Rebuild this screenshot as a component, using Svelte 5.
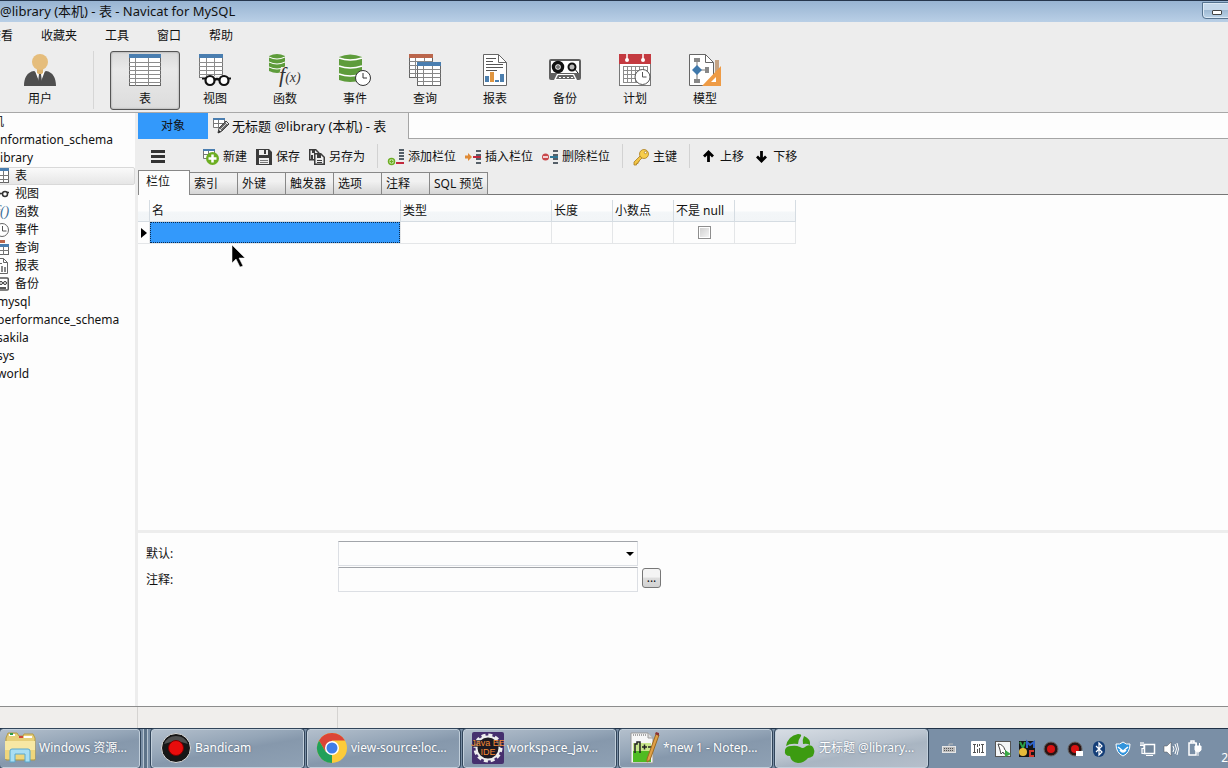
<script lang="ts">
	const menus = ['查看', '收藏夹', '工具', '窗口', '帮助'];

	const tools = [
		{ icon: 'table', label: '表' },
		{ icon: 'view', label: '视图' },
		{ icon: 'func', label: '函数' },
		{ icon: 'event', label: '事件' },
		{ icon: 'query', label: '查询' },
		{ icon: 'report', label: '报表' },
		{ icon: 'backup', label: '备份' },
		{ icon: 'plan', label: '计划' },
		{ icon: 'model', label: '模型' }
	];

	const tree = [
		{ level: 'server', label: '本机' },
		{ level: 'db', label: 'information_schema' },
		{ level: 'db', label: 'library' },
		{ level: 'obj', label: '表', icon: 's-table' },
		{ level: 'obj', label: '视图', icon: 's-view' },
		{ level: 'obj', label: '函数', icon: 's-func' },
		{ level: 'obj', label: '事件', icon: 's-event' },
		{ level: 'obj', label: '查询', icon: 's-query' },
		{ level: 'obj', label: '报表', icon: 's-report' },
		{ level: 'obj', label: '备份', icon: 's-backup' },
		{ level: 'db', label: 'mysql' },
		{ level: 'db', label: 'performance_schema' },
		{ level: 'db', label: 'sakila' },
		{ level: 'db', label: 'sys' },
		{ level: 'db', label: 'world' }
	];

	const actions = [
		[
			{ icon: 'new', label: '新建' },
			{ icon: 'save', label: '保存' },
			{ icon: 'save-as', label: '另存为' }
		],
		[
			{ icon: 'add-field', label: '添加栏位' },
			{ icon: 'insert-field', label: '插入栏位' },
			{ icon: 'delete-field', label: '删除栏位' }
		],
		[{ icon: 'key', label: '主键' }],
		[
			{ icon: 'up', label: '上移' },
			{ icon: 'down', label: '下移' }
		]
	];

	const designTabs = ['栏位', '索引', '外键', '触发器', '选项', '注释', 'SQL 预览'];

	const tasks = [
		{ icon: 'bandicam', label: 'Bandicam' },
		{ icon: 'chrome', label: 'view-source:loc...' },
		{ icon: 'eclipse', label: 'workspace_jav...' },
		{ icon: 'notepad', label: '*new 1 - Notep...' },
		{ icon: 'navicat', label: '无标题 @library...' }
	];

	const tray = ['ime', 'mysql', 'vmc', 'rec', 'rec2', 'bluetooth', 'shield', 'network', 'volume', 'power'];

	let activeTool = '表';
	let activeNode = '表';
	let activeTab = '栏位';
	let activeTask = 'navicat';
	let notNull = false;
	let comment = '';
</script>

{#snippet grid(x, y, w, h, head)}
	<rect {x} {y} width={w} height={h} fill="#fff" stroke="#666" />
	<path
		d="M{x} {y + 7}h{w}M{x} {y + 11}h{w}M{x} {y + 15}h{w}M{x} {y + 19}h{w}M{x + 6} {y + 3}v{h - 3}M{x + 15} {y + 3}v{h - 3}"
		stroke="#888"
		fill="none"
	/>
	<rect x={x - 0.5} y={y - 0.5} width={w + 1} height="4" fill={head} />
{/snippet}

{#snippet bigIcon(name)}
	<svg class="big-icon" viewBox="0 0 32 32" aria-hidden="true">
		{#if name === 'user'}
			<path d="M0 32c0-8 3-14 10-15l6 3 6-3c7 1 10 7 10 15z" fill="#4f4f4f" />
			<path d="M11 17l5 13 5-13-5 2z" fill="#fff" />
			<path d="M13 15h6v4l-3 2-3-2z" fill="#dcb36f" />
			<circle cx="16" cy="8" r="8" fill="#e5bd7c" />
			<path d="M15 20h2l1 8-2 4-2-4z" fill="#4f4f4f" />
		{:else if name === 'table'}
			<rect x="0.5" y="0.5" width="31" height="31" fill="#fff" stroke="#666" />
			<path
				d="M0 8.500h32M0 12.500h32M0 16.500h32M0 20.500h32M0 24.500h32M0 28.500h32M6.500 4v28M19.500 4v28"
				stroke="#8c8c8c"
			/>
			<rect width="32" height="4" fill="#4a7eb0" />
		{:else if name === 'view'}
			<rect x="0.5" y="0.5" width="23" height="23" fill="#fff" stroke="#777" />
			<path d="M0 8.500h24M0 12.500h24M0 16.500h24M0 20.500h24M7.500 4v20M15.500 4v20" stroke="#8c8c8c" />
			<rect width="24" height="4" fill="#4a7eb0" />
			<path d="M3 22h29v10H3z" fill="#ededed" />
			<g fill="#fff" stroke="#111" stroke-width="2.200">
				<circle cx="11" cy="26.500" r="4.500" />
				<circle cx="25" cy="26.500" r="4.500" />
				<path d="M3 24.500h4M15.500 26q2.500-2 5 0M29 24.500h3" fill="none" />
			</g>
		{:else if name === 'func'}
			<path d="M0 2q8-4 16 0v15q-8 4-16 0z" fill="#5e9c3b" />
			<path d="M0 3q8 4 16 0M0 8q8 4 16 0M0 13q8 4 16 0" stroke="#fff" fill="none" />
			<path d="M12 13h6v8h-8z" fill="#ededed" />
			<text x="10" y="28" class="fx">f<tspan class="fx-arg">(x)</tspan></text>
		{:else if name === 'event'}
			<path d="M0 3q11-5 23 0v23q-12 4-23 0z" fill="#5e9c3b" />
			<path d="M0 4q11 4 23 0M0 12q11 4 23 0M0 20q11 4 23 0" stroke="#fff" stroke-width="1.500" fill="none" />
			<circle cx="24" cy="24" r="7.500" fill="#fff" stroke="#333" />
			<path d="M24 19v5h4" stroke="#333" fill="none" />
		{:else if name === 'query'}
			{@render grid(0.5, 0.5, 23, 23, '#bb664c')}
			{@render grid(8.5, 8.5, 23, 23, '#4a7eb0')}
		{:else if name === 'report'}
			<path d="M4.500 0.500h15l8 8v23h-23z" fill="#fff" stroke="#666" />
			<path d="M19.500 0.500v8h8" fill="none" stroke="#666" />
			<path d="M7 4.500h10M7 7.500h7M7 10.500h17M7 13.500h17M7 16.500h11" stroke="#555" />
			<path d="M6 22h4v6H6zM21 20h4v8h-4z" fill="#4c7fae" />
			<path d="M11 18h4v10h-4z" fill="#e0953f" />
			<path d="M16 26h4v2h-4z" fill="#4c7fae" />
		{:else if name === 'backup'}
			<rect x="0" y="5" width="32" height="21" rx="2" fill="#606060" />
			<path d="M2 7h28v12H2z" fill="#fff" />
			<circle cx="9" cy="13" r="4.500" fill="#fff" stroke="#111" stroke-width="3.500" />
			<circle cx="9" cy="13" r="2" fill="#777" />
			<circle cx="23" cy="13" r="3.500" fill="#bbb" stroke="#111" stroke-width="2" />
			<path d="M25 14l4 5" stroke="#111" />
			<path d="M5 26l3-6h17l3 6z" fill="#fff" />
			<path d="M7 25l2-4h15l2 4z" fill="#666" />
			<path d="M10 23.500h14" stroke="#fff" stroke-dasharray="2 2" />
		{:else if name === 'plan'}
			<rect x="0.5" y="0.5" width="31" height="31" fill="#fff" stroke="#777" />
			<rect width="32" height="10" fill="#c43a40" />
			<path d="M8 0v6M24 0v6" stroke="#fff" stroke-width="1.500" />
			<circle cx="8" cy="6" r="2" fill="#fff" />
			<circle cx="24" cy="6" r="2" fill="#fff" />
			<path
				d="M4 12.500h24M4 16.500h24M4 20.500h24M4 24.500h24M4 28.500h24M4.500 12v17M8.500 12v17M12.500 12v17M16.500 12v17M20.500 12v17M24.500 12v17M28.500 12v17"
				stroke="#8c8c8c"
			/>
			<circle cx="23.500" cy="23" r="7.500" fill="#fff" stroke="#555" />
			<path d="M23.500 18v5h4" fill="none" stroke="#555" />
		{:else if name === 'model'}
			<path d="M0.500 0.500h16l8 8v23h-24z" fill="#fff" stroke="#666" />
			<path d="M16.500 0.500v8h8" fill="none" stroke="#666" />
			<path d="M8 6v20M8 16h10" stroke="#777" />
			<path d="M5 4h6v4H5zM5 25h6v4H5zM16 13h4v6h-4z" fill="#888" />
			<path d="M8 11l5 5-5 5-5-5z" fill="#3f78ab" />
			<path d="M26 6h4v12h-4z" fill="#c5a383" />
			<path d="M32 12v20H13z" fill="#ee9b45" />
			<path d="M27 23v5h-5z" fill="#fff" />
		{/if}
	</svg>
{/snippet}

{#snippet fieldRows(color)}
	<path d="M11 1h5v2h-5zM11 5h5v2h-5zM11 9h5v2h-5zM11 13h5v2h-5z" fill="#555f68" />
	<path d="M8 8h8" stroke={color} stroke-width="2" />
{/snippet}

{#snippet smallIcon(name)}
	<svg class="small-icon" viewBox="0 0 16 16" aria-hidden="true">
		{#if name === 'new' || name === 'edit'}
			<path d="M0.500 0.500h11v9h-11zM0 5.500h12M5.500 1v9" fill="#fff" stroke="#777" />
			<path d="M0 0h12v2H0z" fill="#4a7eb0" />
			{#if name === 'new'}
				<circle cx="9.500" cy="9.500" r="6.500" fill="#6cae22" />
				<path d="M9.500 5.500v8M5.500 9.500h8" stroke="#fff" stroke-width="2.500" />
			{:else}
				<path d="M5 15l1-5 7-7 3 3-7 7z" fill="#fff" stroke="#444" />
				<path d="M6.500 11L13 4.500M8 12.500L14.500 6" stroke="#555" stroke-width="1.500" />
				<path d="M5 15l1-3 2 2z" fill="#222" />
			{/if}
		{:else if name === 's-table'}
			<rect x="0.5" y="0.5" width="15" height="14" fill="#fff" stroke="#666" />
			<path d="M0 7.500h16M0 11.500h16M5.500 3v12M10.500 3v12" stroke="#777" />
			<path d="M0 0h16v3H0z" fill="#4a7eb0" />
		{:else if name === 's-query'}
			<path d="M0 0h12v3H0z" fill="#bb664c" />
			<rect x="4.500" y="4.500" width="11" height="10" fill="#fff" stroke="#666" />
			<path d="M4 10.500h12M10.500 7v8" stroke="#777" />
			<path d="M4 4h12v3H4z" fill="#4a7eb0" />
		{:else if name === 's-view'}
			<g fill="#fff" stroke="#333" stroke-width="1.500">
				<circle cx="4" cy="8" r="2.500" />
				<circle cx="12" cy="8" r="2.500" />
				<path d="M6 7.500h4M14 6.500h2" />
			</g>
		{:else if name === 's-func'}
			<text x="3" y="12" class="fx-small">f()</text>
		{:else if name === 's-event'}
			<circle cx="9" cy="8" r="6.500" fill="#fff" stroke="#666" />
			<path d="M9.500 4v5h4" fill="none" stroke="#555" />
		{:else if name === 's-report'}
			<path d="M2.500 0.500h8l4 4v11h-12z" fill="#fff" stroke="#666" />
			<path d="M10.500 0.500v4h4M5 5.500h4" fill="none" stroke="#666" />
			<path d="M5 10h2v4H5zM8 8h2v6H8zM11 9h2v5h-2z" fill="#888" />
		{:else if name === 's-backup'}
			<rect x="0.750" y="2" width="14.500" height="12" rx="1" fill="#fff" stroke="#555" stroke-width="1.500" />
			<circle cx="8" cy="7" r="1.500" fill="none" stroke="#333" />
			<circle cx="12" cy="7" r="1.500" fill="none" stroke="#333" />
			<path d="M5 11h8v2H5z" fill="#555" />
		{:else if name === 'save'}
			<path d="M0 0h13l3 3v13H0z" fill="#3b3b3b" />
			<path d="M3 1h9v5H3zM3 9h10v6H3z" fill="#eee" />
			<path d="M8 1h2v4H8z" fill="#3b3b3b" />
			<path d="M4 11.500h8M4 13.500h8" stroke="#777" />
		{:else if name === 'save-as'}
			<path d="M0.750 0.750h6l3 3v7h-9z" fill="#eee" stroke="#3b3b3b" stroke-width="1.500" />
			<path d="M3 1h3v3H3zM2 6h2v4H2z" fill="#3b3b3b" />
			<path d="M5.750 4.750h6l3.500 3.500v7h-9.500z" fill="#eee" stroke="#3b3b3b" stroke-width="1.500" />
			<path d="M8 5h4v4H8z" fill="#3b3b3b" />
			<path d="M8 11.500h5M8 13.500h5" stroke="#3b3b3b" />
		{:else if name === 'add-field'}
			<path d="M11 1h5M11 4h5M11 7h5M11 10h5" stroke="#555f68" stroke-width="2" />
			<path d="M8 14h8" stroke="#c2283d" stroke-width="2" />
			<circle cx="3.500" cy="12.500" r="3" fill="#fff" stroke="#6cae22" stroke-width="1.500" />
			<path d="M3.500 10.500v4M1.500 12.500h4" stroke="#6cae22" stroke-width="1.500" />
		{:else if name === 'insert-field'}
			{@render fieldRows('#c2283d')}
			<path d="M0 6.500h3V4l4 4-4 4V9.500H0z" fill="#e08a35" />
		{:else if name === 'delete-field'}
			{@render fieldRows('#2e7898')}
			<circle cx="3.500" cy="8" r="3.500" fill="#c9474b" />
			<path d="M1 8h5" stroke="#fff" stroke-width="1.500" />
		{:else if name === 'key'}
			<path d="M1 13l7-7 2 2-4 4v1H5v1.500H3.500V16H1z" fill="#f2c545" stroke="#a97c20" stroke-width="0.800" />
			<circle cx="11" cy="5" r="4.500" fill="#f7cd4b" stroke="#a97c20" stroke-width="0.800" />
			<circle cx="12.500" cy="3.500" r="1.200" fill="#fff" stroke="#a97c20" stroke-width="0.800" />
		{:else if name === 'up'}
			<path d="M8.500 13V4M4 7.500L8.500 3 13 7.500" fill="none" stroke="#000" stroke-width="2.800" />
		{:else if name === 'down'}
			<path d="M8.500 2v9M4 7.500L8.500 12 13 7.500" fill="none" stroke="#000" stroke-width="2.800" />
		{:else if name === 'burger'}
			<path d="M1 2.500h14M1 7.500h14M1 12.500h14" stroke="#333" stroke-width="3" />
		{/if}
	</svg>
{/snippet}

{#snippet taskIcon(name)}
	<svg class="task-icon" viewBox="0 0 32 32" aria-hidden="true">
		{#if name === 'explorer'}
			<path d="M2 6l2-5h9l2 3h4l1-2h9l2 4v22H2z" fill="#e6cf79" stroke="#b59a45" />
			<path d="M5 3h6M20 5h8" stroke="#fff" stroke-width="2" />
			<path d="M6 2h3" stroke="#2f9b44" stroke-width="2" />
			<path d="M15 5h4" stroke="#cf473a" stroke-width="2" />
			<path d="M1 9h30v18H1z" fill="#f7e8a4" />
			<path d="M1 18h30v9H1z" fill="#efd67c" />
			<path d="M6 30V19q0-2 2-2h16q2 0 2 2v11h-5v-8H11v8z" fill="#a9def3" stroke="#5aa8cc" />
		{:else if name === 'bandicam'}
			<circle cx="16" cy="16" r="14.500" fill="#161616" stroke="#ddd" />
			<path d="M4 12a13 13 0 0 1 24 0q-12-5-24 0z" fill="#777" opacity="0.6" />
			<circle cx="16" cy="16" r="7.500" fill="#e80c0c" stroke="#7a0000" />
		{:else if name === 'chrome'}
			<circle cx="16" cy="16" r="15" fill="#fccb3a" />
			<path d="M3 8.500A15 15 0 0 1 29 8.500H16l-6.500 11z" fill="#dc4437" />
			<path d="M3 8.500l6.500 11L16 23v8A15 15 0 0 1 3 8.500z" fill="#21a05a" />
			<circle cx="16" cy="16" r="7" fill="#fff" />
			<circle cx="16" cy="16" r="5.500" fill="#3f7de8" />
		{:else if name === 'eclipse'}
			<rect width="32" height="32" rx="2" fill="#46306e" />
			<circle cx="16" cy="16" r="13" fill="none" stroke="#eee" stroke-width="3" stroke-dasharray="4 2.800" />
			<circle cx="16" cy="16" r="11.500" fill="#1d1a22" stroke="#eee" stroke-width="2" />
			<path d="M1 8h30v7H1z" fill="#1d1a22" opacity="0.7" />
			<text x="16" y="14" class="ee">Java EE</text>
			<text x="16" y="23" class="ee">IDE</text>
		{:else if name === 'notepad'}
			<path d="M3 1h17l5 5v25H3z" fill="#f6f6f6" stroke="#999" />
			<path d="M20 1v5h5" fill="#ddd" stroke="#999" />
			<path d="M5 19h18v11H5z" fill="#4fbb22" />
			<path d="M5 11h18v8H5z" fill="#c8e68a" />
			<path d="M5 3h13" stroke="#555" stroke-dasharray="1 1" />
			<path d="M7 21v-9h2v-2h3v11M14 15h5M16.500 12.500v5M20 15h4" fill="none" stroke="#222" stroke-width="1.500" />
			<path d="M19 27l9-25 3 1-9 25-3 2z" fill="#e0a046" stroke="#9a6a22" />
			<path d="M27 2l1-2 3 1v3z" fill="#8b3434" />
		{:else if name === 'navicat'}
			<path d="M2 14Q4 4 14 2q4 0 3 2-3 4-3 8-8-1-12 2z" fill="#3c9b11" />
			<path d="M20 4q7 3 6 9-3-2-7-1-1-4 1-8z" fill="#3c9b11" />
			<path d="M16 15q3 2 5 0 3-3 7-1 4 4 1 10-3 2-5 2-4 5-10 5-7-1-8-7-6 0-5-6 1-4 6-4 5-1 9 1z" fill="#3c9b11" />
		{/if}
	</svg>
{/snippet}

{#snippet trayIcon(name)}
	<svg class="tray-icon" viewBox="0 0 16 16" aria-hidden="true">
		{#if name === 'keyboard'}
			<rect x="1.500" y="5.500" width="13" height="6" fill="#bbb" stroke="#e6e6e6" />
			<path d="M3 7.500h10M3 9.500h10" stroke="#555" stroke-dasharray="1 1" />
			<path d="M8 5V3h4" fill="none" stroke="#bbb" />
		{:else if name === 'ime'}
			<rect width="15" height="15" rx="1" fill="#fff" />
			<path
				d="M2 3.500h3M2 11.500h3M3.500 4v8M6.500 3v3M6.500 8v4M8.500 3v2M8.500 7v5M10 3.500h3M11.500 4v8M10 11.500h3"
				stroke="#555"
				fill="none"
			/>
		{:else if name === 'mysql'}
			<rect x="0.5" y="0.5" width="15" height="15" fill="#f4f6f7" stroke="#555" />
			<path d="M3 3q5 0 7 6l3 3-4 1-1-2-2 2q-1-5-3-10z" fill="#fff" stroke="#444" />
			<path d="M10 9l6 4-6 3z" fill="#39a845" />
		{:else if name === 'vmc'}
			<rect width="16" height="16" fill="#161616" />
			<path d="M1 1l3 6 2-6" fill="none" stroke="#2aa049" stroke-width="2" />
			<path d="M8 7V1l3 3 4-3v6" fill="none" stroke="#3064c8" stroke-width="2" />
			<circle cx="4" cy="11" r="4" fill="#e7bb3a" />
			<path d="M15 10h-4v5h4" fill="none" stroke="#d2352c" stroke-width="2" />
		{:else if name === 'rec' || name === 'rec2'}
			<circle cx="8" cy="8" r="7" fill="#2a1515" stroke="#666" />
			<circle cx="8" cy="8" r="4" fill="#d81212" />
			{#if name === 'rec2'}
				<rect x="9" y="10" width="7" height="5" fill="#fff" />
			{/if}
		{:else if name === 'bluetooth'}
			<rect x="2" width="12" height="16" rx="6" fill="#143e78" />
			<path d="M5 5l6 6-3 3V2l3 3-6 6" fill="none" stroke="#fff" stroke-width="1.200" />
		{:else if name === 'shield'}
			<path d="M1 3q4 1 7-2 3 3 7 2 0 9-7 12-7-3-7-12z" fill="#3294dc" stroke="#fff" />
			<path d="M3 6l5 4 5-4M5 9q3 4 6 0" fill="none" stroke="#fff" stroke-width="1.500" />
		{:else if name === 'network'}
			<rect x="5.500" y="3.500" width="10" height="9" fill="#73879c" stroke="#fff" stroke-width="1.500" />
			<path d="M7 14.500h7M2 1v3M4 1v3M1 4.500h4v3H3v5h2" fill="none" stroke="#fff" stroke-width="1.200" />
		{:else if name === 'volume'}
			<path d="M1 5h3l4-4v14l-4-4H1z" fill="#fff" stroke="#555" stroke-width="0.500" />
			<path d="M10 5q2 3 0 6M12 3q3 5 0 10M14 2q3 6 0 12" fill="none" stroke="#fff" />
		{:else if name === 'power'}
			<path d="M2 2h7v12H2zM4 0h3v2H4z" fill="none" stroke="#fff" stroke-width="1.500" />
			<path d="M8 5h6v4q-1 2-3 2t-3-2zM9.500 2v3M12.500 2v3M11 11v4" fill="#fff" stroke="#fff" />
		{/if}
	</svg>
{/snippet}

<div class="desktop">
	<header class="title-bar">
		<h1>@library (本机) - 表 - Navicat for MySQL</h1>
		<button class="minimize" aria-label="最小化"><span></span></button>
	</header>

	<nav class="menu-bar">
		{#each menus as menu}
			<button>{menu}</button>
		{/each}
	</nav>

	<div class="main-tools">
		<button class="tool">
			{@render bigIcon('user')}
			用户
		</button>
		<span class="tool-sep"></span>
		{#each tools as tool}
			<button
				class="tool"
				class:active={activeTool === tool.label}
				on:click={() => (activeTool = tool.label)}
			>
				{@render bigIcon(tool.icon)}
				{tool.label}
			</button>
		{/each}
	</div>

	<div class="workspace">
		<aside class="sidebar">
			<ul class="tree">
				{#each tree as node}
					<li>
						<button
							class="node {node.level}"
							class:selected={activeNode === node.label}
							on:click={() => (activeNode = node.label)}
						>
							{#if node.icon}
								{@render smallIcon(node.icon)}
							{/if}
							{node.label}
						</button>
					</li>
				{/each}
			</ul>
		</aside>

		<main class="editor">
			<div class="doc-tabs">
				<button class="doc-tab objects">对象</button>
				<button class="doc-tab current">
					{@render smallIcon('edit')}
					无标题 @library (本机) - 表
				</button>
				<div class="doc-rest"></div>
			</div>

			<div class="actions">
				<button class="action burger" aria-label="菜单">{@render smallIcon('burger')}</button>
				{#each actions as group, i}
					{#if i > 0}
						<span class="action-sep"></span>
					{/if}
					{#each group as action}
						<button class="action">
							{@render smallIcon(action.icon)}
							{action.label}
						</button>
					{/each}
				{/each}
			</div>

			<div class="design-tabs">
				{#each designTabs as tab}
					<button
						class="design-tab"
						class:active={activeTab === tab}
						on:click={() => (activeTab = tab)}>{tab}</button
					>
				{/each}
			</div>

			<div class="fields">
				<table>
					<colgroup>
						<col class="c-mark" />
						<col class="c-name" />
						<col class="c-type" />
						<col class="c-small" />
						<col class="c-small" />
						<col class="c-small" />
						<col class="c-small" />
					</colgroup>
					<thead>
						<tr>
							<th></th>
							<th>名</th>
							<th>类型</th>
							<th>长度</th>
							<th>小数点</th>
							<th>不是 null</th>
							<th></th>
						</tr>
					</thead>
					<tbody>
						<tr>
							<td><span class="marker"></span></td>
							<td class="editing"><div></div></td>
							<td></td>
							<td></td>
							<td></td>
							<td class="check"><input type="checkbox" aria-label="不是 null" bind:checked={notNull} /></td>
							<td></td>
						</tr>
					</tbody>
				</table>
			</div>

			<form class="props">
				<label for="default">默认:</label>
				<div class="select">
					<select id="default"><option></option></select>
				</div>
				<label for="comment">注释:</label>
				<div class="comment">
					<input id="comment" type="text" bind:value={comment} />
					<button type="button">...</button>
				</div>
			</form>
		</main>
	</div>

	<footer class="status-bar">
		<span class="status-first"></span>
		<span class="status-second"></span>
	</footer>

	<div class="taskbar">
		<button class="task first">
			{@render taskIcon('explorer')}
			<span>Windows 资源...</span>
		</button>
		<span class="stack"></span>
		{#each tasks as task}
			<button
				class="task"
				class:active={activeTask === task.icon}
				on:click={() => (activeTask = task.icon)}
			>
				{@render taskIcon(task.icon)}
				<span>{task.label}</span>
			</button>
		{/each}
		<div class="tray">
			<span class="keyboard">{@render trayIcon('keyboard')}</span>
			{#each tray as item}
				{@render trayIcon(item)}
			{/each}
		</div>
		<span class="clock">2</span>
	</div>

	<svg class="cursor" viewBox="0 0 14 24" aria-hidden="true">
		<path d="M1 1v18l4-4 4 8 3-1-4-8h6z" fill="#000" stroke="#fff" stroke-width="0.500" />
	</svg>
</div>

<style>
	:global(body) {
		margin: 0;
	}

	.desktop {
		position: relative;
		display: flex;
		flex-direction: column;
		min-height: 100vh;
		overflow: hidden;
		background: #ededed;
		color: #111;
		font-family: 'Noto Sans', 'Noto Sans CJK SC', sans-serif;
		font-size: 12px;
		line-height: 18px;
	}

	button,
	input,
	select {
		margin: 0;
		padding: 0;
		border: 0;
		background: none;
		color: inherit;
		font: inherit;
		white-space: nowrap;
	}

	svg {
		display: block;
		flex: none;
		overflow: visible;
	}

	/* Title bar */
	.title-bar {
		display: flex;
		justify-content: space-between;
		height: 21px;
		border-top: 1px solid #26364c;
		background: linear-gradient(#98b4d2, #b9cfe6);
	}

	.title-bar h1 {
		margin: 0;
		font-size: 13px;
		font-weight: normal;
		line-height: 20px;
	}

	.minimize {
		display: flex;
		align-items: center;
		justify-content: center;
		width: 30px;
		height: 17px;
		margin: 1px -4px 0 0;
		border: 1px solid #56738f;
		border-radius: 0 0 0 4px;
		background: linear-gradient(#c5d8ea 45%, #9fbad3 50%, #bbd3e8);
		box-shadow: inset 0 0 0 1px #dce9f5;
	}

	.minimize span {
		width: 8px;
		height: 3px;
		margin-top: 3px;
		border: 1px solid #444;
		border-radius: 1px;
		background: #fff;
	}

	/* Menu */
	.menu-bar {
		display: flex;
		gap: 28px;
		height: 27px;
		margin-left: -11px;
	}

	/* Main toolbar */
	.main-tools {
		display: flex;
		align-items: flex-start;
		height: 61px;
		padding: 2px 5px 0;
		border-bottom: 1px solid #a8a8a8;
	}

	.tool {
		display: flex;
		flex-direction: column;
		align-items: center;
		gap: 4px;
		box-sizing: border-box;
		width: 70px;
		height: 59px;
		padding-top: 2px;
		border: 1px solid transparent;
		border-radius: 3px;
	}

	.tool.active {
		border-color: #555;
		background: linear-gradient(#dadada, #e9e9e9 30%, #dcdcdc);
		box-shadow: inset 0 0 2px #888;
	}

	.tool-sep {
		width: 1px;
		height: 58px;
		margin: 0 16px 0 18px;
		background: #d6d6d6;
	}

	.big-icon {
		width: 32px;
		height: 32px;
	}

	.fx {
		fill: #333;
		font: italic 22px 'Liberation Serif', serif;
	}

	.fx-arg {
		font-size: 14px;
	}

	.fx-small {
		fill: #3b6d96;
		font: italic 14px 'Liberation Serif', serif;
	}

	.small-icon {
		width: 16px;
		height: 16px;
	}

	/* Sidebar */
	.workspace {
		display: flex;
		flex: 1;
	}

	.sidebar {
		width: 135px;
		overflow: hidden;
		background: #fdfdfd;
	}

	.tree {
		margin: 0 0 0 -24px;
		padding: 0;
		list-style: none;
	}

	.node {
		display: flex;
		align-items: center;
		gap: 6px;
		box-sizing: border-box;
		width: 100%;
		height: 18px;
		border: 1px solid transparent;
	}

	.server {
		padding-left: 3px;
	}

	.db {
		padding-left: 20px;
	}

	.obj {
		padding-left: 16px;
	}

	.node.selected {
		border-color: #d9d9d9;
		border-radius: 2px;
		background: linear-gradient(#fafafa, #e6e6e6);
	}

	/* Document tabs */
	.editor {
		display: flex;
		flex: 1;
		flex-direction: column;
		min-width: 0;
		margin-left: 3px;
	}

	.doc-tabs {
		display: flex;
		height: 26px;
	}

	.doc-tab.objects {
		width: 70px;
		background: #3399fb;
	}

	.doc-tab.current {
		display: flex;
		align-items: center;
		gap: 3px;
		box-sizing: border-box;
		width: 200px;
		padding-left: 5px;
		font-size: 13px;
	}

	.doc-rest {
		flex: 1;
		border-bottom: 1px solid #a5a5a5;
		border-left: 1px solid #a5a5a5;
		background: #fdfdfd;
	}

	/* Field actions */
	.actions {
		display: flex;
		gap: 9px;
		height: 31px;
		padding: 4px 12px 0;
		box-sizing: border-box;
	}

	.action {
		display: flex;
		align-items: center;
		gap: 4px;
	}

	.burger {
		margin-right: 28px;
	}

	.action-sep {
		width: 1px;
		height: 24px;
		margin: 1px 1px 0 3px;
		background: #d2d2d2;
	}

	.design-tabs {
		display: flex;
		align-items: flex-end;
		height: 25px;
		box-shadow: inset 0 -1px #777;
	}

	.design-tab {
		box-sizing: border-box;
		min-width: 48px;
		height: 23px;
		padding: 0 4px;
		border: 1px solid #888;
		border-left-width: 0;
		background: linear-gradient(#f1f1f1 40%, #d6d6d6);
		text-align: left;
	}

	.design-tab.active {
		width: 52px;
		height: 25px;
		padding: 0 7px 2px;
		border-width: 1px 1px 0;
		background: #fdfdfd;
	}

	/* Field grid */
	.fields {
		flex: 1;
		padding-top: 5px;
		border-bottom: 3px solid #ededed;
		background: #fdfdfd;
	}

	table {
		width: 658px;
		border-collapse: separate;
		border-spacing: 0;
		table-layout: fixed;
	}

	.c-mark {
		width: 12px;
	}

	.c-name {
		width: 251px;
	}

	.c-type {
		width: 151px;
	}

	.c-small {
		width: 61px;
	}

	th,
	td {
		box-sizing: border-box;
		height: 22px;
		padding: 0 0 0 2px;
		border-right: 1px solid #e4e6e8;
		border-bottom: 1px solid #e4e6e8;
	}

	th {
		border-right-color: #d5dce2;
		border-bottom-color: #d5dce2;
		background: linear-gradient(#fdfdfd 50%, #f3f6f8 60%, #f2f5f7);
		font-weight: normal;
		text-align: left;
		white-space: nowrap;
	}

	.marker {
		display: block;
		margin-left: 1px;
		border: 5px solid transparent;
		border-right: 0;
		border-left: 6px solid #000;
	}

	td.editing {
		padding: 0;
	}

	.editing div {
		box-sizing: border-box;
		height: 21px;
		border: 1px dotted #0b2c50;
		background: #3399fb;
	}

	.check {
		text-align: center;
	}

	.check input {
		display: block;
		width: 13px;
		height: 13px;
		margin: 0 auto 0 22px;
		border: 1px solid #8e8e8e;
		background: linear-gradient(135deg, #ccc, #f8f8f8);
		box-shadow: inset 0 0 0 1px #fff;
		appearance: none;
	}

	/* Field properties */
	.props {
		display: grid;
		grid-template-columns: 192px 1fr;
		grid-auto-rows: 26px;
		align-items: start;
		box-sizing: border-box;
		height: 173px;
		padding: 8px;
		background: #fdfdfd;
	}

	.props label {
		line-height: 26px;
	}

	.select {
		position: relative;
		width: 300px;
	}

	.select::after {
		position: absolute;
		top: 11px;
		right: 4px;
		border: 4px solid transparent;
		border-top-color: #000;
		border-bottom: 0;
		content: '';
		pointer-events: none;
	}

	.select select,
	.comment input {
		box-sizing: border-box;
		width: 300px;
		height: 25px;
		border: 1px solid #dcdfe4;
		border-top-color: #a2a5aa;
		background: #fdfdfd;
		appearance: none;
	}

	.select select {
		display: block;
	}

	.comment {
		display: flex;
		gap: 4px;
	}

	.comment button {
		box-sizing: border-box;
		width: 19px;
		height: 20px;
		margin-top: 1px;
		border: 1px solid #777;
		border-radius: 3px;
		background: linear-gradient(#f4f4f4 45%, #dedede 50%, #d2d2d2);
	}

	/* Status bar */
	.status-bar {
		display: flex;
		height: 21px;
		border-top: 1px solid #8c8c8c;
		background: #f0eeec;
	}

	.status-first,
	.status-second {
		width: 137px;
		border-right: 1px solid #d5d3d1;
	}

	.status-second {
		width: 199px;
	}

	/* Taskbar */
	.taskbar {
		display: flex;
		box-sizing: border-box;
		height: 40px;
		border-top: 1px solid #1f3147;
		background: #7a8fa6;
		color: #fff;
	}

	.task {
		display: flex;
		align-items: center;
		gap: 3px;
		box-sizing: border-box;
		width: 153px;
		height: 39px;
		margin-right: 3px;
		padding: 0 0 1px 8px;
		border: 1px solid #c2cfdb;
		border-radius: 3px;
		outline: 1px solid #32455a;
		background: linear-gradient(170deg, #b3bfcc, #94a5b7 40%, #8698ac 55%, #8fa1b4);
	}

	.task.first {
		width: 140px;
		margin-right: 0;
		padding-left: 4px;
		border-left: 0;
	}

	.task.active {
		background: linear-gradient(170deg, #d7dde4, #bac4cf 45%, #a9b5c2 60%, #b5bfcb);
	}

	.task span {
		text-shadow: 0 0 2px #4d5f73;
	}

	.stack {
		width: 3px;
		margin: 0 3px;
		border-right: 1px solid #b5c3d0;
		border-left: 1px solid #b5c3d0;
		background: #5d7389;
	}

	.task-icon {
		width: 32px;
		height: 32px;
	}

	.ee {
		fill: #f58a35;
		font: 9px 'Liberation Sans', sans-serif;
		text-anchor: middle;
	}

	.tray {
		display: flex;
		align-items: center;
		gap: 8px;
		margin-left: 10px;
	}

	.keyboard {
		margin-right: 6px;
	}

	.tray-icon {
		width: 16px;
		height: 16px;
	}

	.clock {
		margin: 20px 0 0 auto;
	}

	.cursor {
		position: absolute;
		top: 244px;
		left: 231px;
		width: 14px;
		height: 24px;
	}
</style>
